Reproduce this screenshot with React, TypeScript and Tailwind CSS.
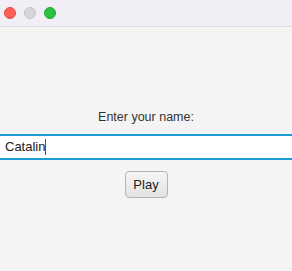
import React from "react";

export default function App() {
  return (
    <div className="w-[292px] h-[271px] bg-[#f4f4f4] flex flex-col" style={{ fontFamily: "'Liberation Sans', Arial, sans-serif" }}>
      <div className="h-[27px] bg-[#f1eff5] border-b border-[#dcdadf] flex items-center gap-[8px] pl-[4px] shrink-0">
        <div className="w-[12px] h-[12px] rounded-full bg-[#fe5f57] border border-[#e24b41]" />
        <div className="w-[12px] h-[12px] rounded-full bg-[#d6d5da] border border-[#c3c2c7]" />
        <div className="w-[12px] h-[12px] rounded-full bg-[#29c33f] border border-[#1ea52f]" />
      </div>
      <div className="flex flex-col items-center pt-[82px]">
        <div className="text-[12.5px] text-[#333] leading-[16px]">Enter your name:</div>
        <div className="w-full mt-[9px] h-[26px] bg-white border-y-2 border-[#1f9bd7] flex items-center pl-[5px] text-[13px] text-[#222]">
          <span>Catalin</span>
          <span className="w-[1px] h-[16px] bg-[#555]" />
        </div>
        <button className="mt-[11px] w-[43px] h-[27px] rounded-[4px] border border-[#b5b5b5] bg-gradient-to-b from-[#f6f6f6] to-[#e2e2e2] text-[13px] text-[#222]">Play</button>
      </div>
    </div>
  );
}
